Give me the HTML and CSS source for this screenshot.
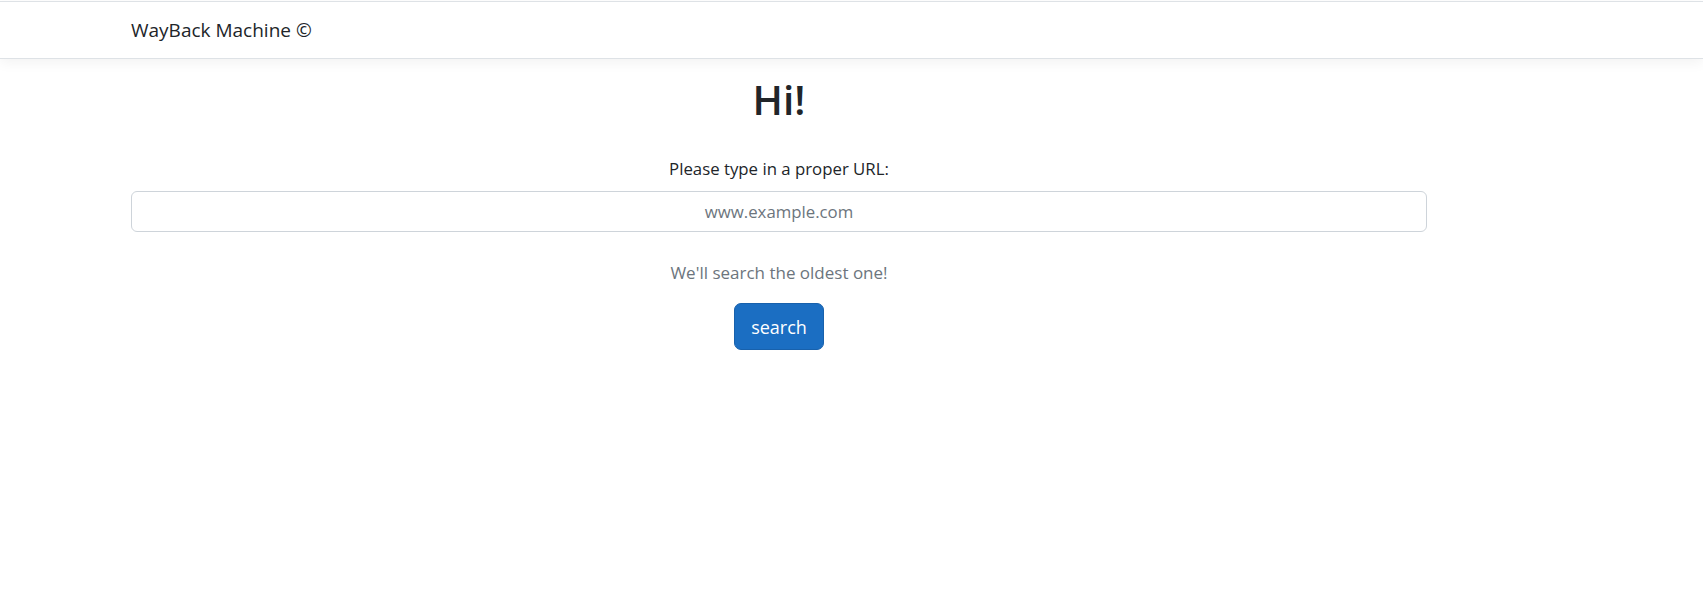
FILE: index.html
```html
<!DOCTYPE html>
<html lang="en">

<head>
    <meta charset="UTF-8">
    <meta name="viewport" content="width=device-width, initial-scale=1.0">
    <title>WayBack Machine</title>
    <link rel="stylesheet" href="styles.css">
</head>

<body>
    <header class="navbar">
        <div class="container">
            <a href="javascript:;" class="navbar-brand">WayBack Machine &copy;</a>
        </div>
    </header>

    <main class="container main">
        <h1 class="title">Hi!</h1>
        <form class="search-form" onsubmit="return false;">
            <label for="url" class="form-label">Please type in a proper URL:</label>
            <input type="text" id="url" class="form-control" placeholder="www.example.com">
            <p class="form-text">We'll search the oldest one!</p>
            <button type="submit" class="btn-primary">search</button>
        </form>
    </main>
</body>

</html>
```

FILE: styles.css
```css
* {
    margin: 0;
    padding: 0;
    box-sizing: border-box;
}

body {
    font-family: "Open Sans", "Noto Sans", sans-serif;
    font-size: 17px;
    line-height: 26px;
    color: #212529;
    background-color: #fff;
}

a {
    text-decoration: none;
    color: #212529;
}

.container {
    width: 1320px;
    margin-left: 119px;
    padding: 0 12px;
}

.navbar {
    margin-top: 1px;
    height: 58px;
    border-top: 1px solid #dee2e6;
    border-bottom: 1px solid #dee2e6;
    box-shadow: 0 4px 12px rgba(0, 0, 0, .05);
    display: flex;
    align-items: center;
}

.navbar-brand {
    font-size: 19px;
    line-height: 28px;
}

.main {
    text-align: center;
}

.title {
    margin-top: 15px;
    font-size: 40.5px;
    line-height: 52px;
    font-weight: 600;
}

.form-label {
    display: block;
    margin-top: 30px;
    margin-bottom: 9px;
    font-size: 16.8px;
}

.form-control {
    display: block;
    width: 100%;
    height: 41px;
    border: 1px solid #ced4da;
    border-radius: 6px;
    font-family: inherit;
    font-size: 16.8px;
    color: #212529;
    text-align: center;
    outline: none;
}

.form-control::placeholder {
    color: #6c757d;
}

.form-text {
    margin-top: 28px;
    font-size: 17px;
    color: #6c757d;
}

.btn-primary {
    margin-top: 17px;
    width: 90px;
    height: 47px;
    border: 1px solid #1861ac;
    border-radius: 7px;
    background-color: #1b6ec2;
    color: #fff;
    font-family: inherit;
    font-size: 18px;
    cursor: pointer;
}
```
